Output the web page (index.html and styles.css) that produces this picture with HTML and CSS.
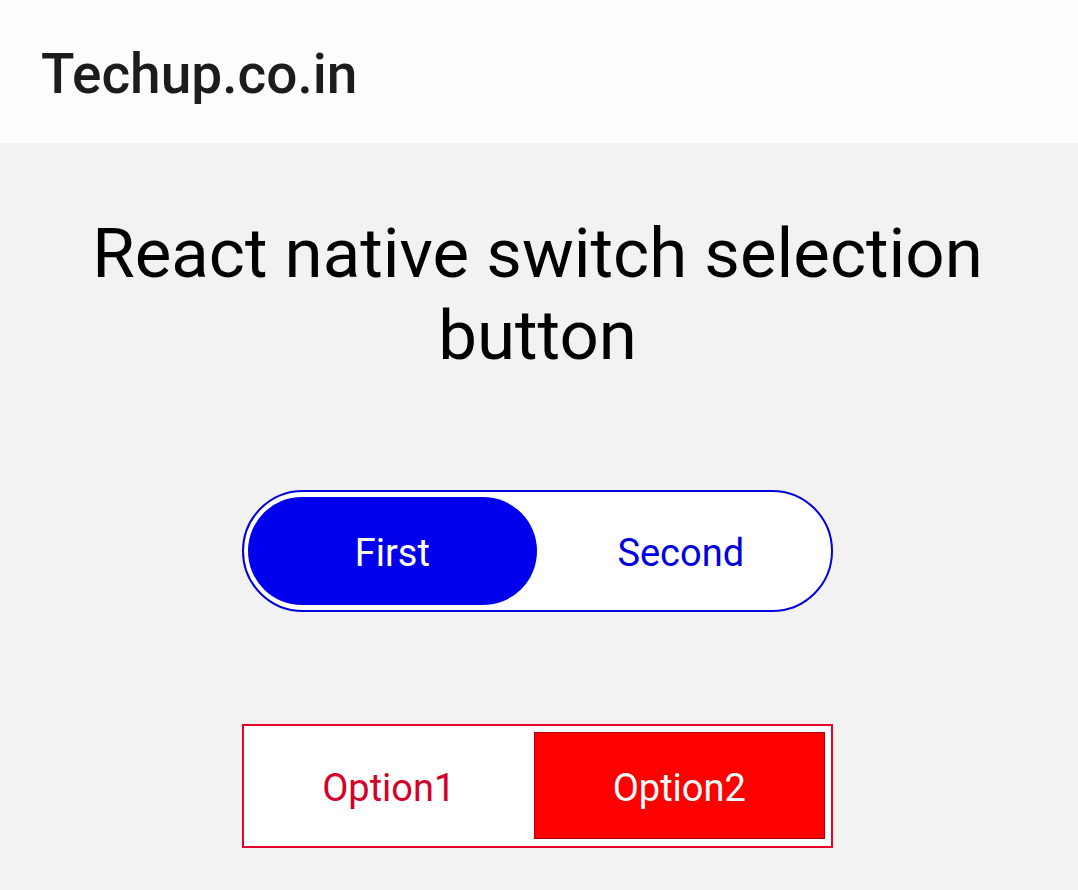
FILE: index.html
```html
<!DOCTYPE html>
<html lang="en">
<head>
    <meta charset="UTF-8">
    <title>Techup.co.in - Switch selector</title>
    <link rel="stylesheet" href="styles.css">
</head>
<body>
    <div class="app-bar">
        <div class="app-title">Techup.co.in</div>
    </div>

    <div class="screen">
        <h1 class="heading">React native switch selection button</h1>

        <div class="switch round">
            <div class="switch-item active">First</div>
            <div class="switch-item">Second</div>
        </div>

        <div class="switch square">
            <div class="switch-item">Option1</div>
            <div class="switch-item active">Option2</div>
        </div>
    </div>
</body>
</html>
```

FILE: styles.css
```css
body {
    margin: 0;
    font-family: Roboto, "Noto Sans", sans-serif;
    background: #f2f2f2;
    min-height: 100vh;
}

.app-bar {
    height: 143px;
    background: #fdfdfd;
    display: flex;
    align-items: center;
    padding-left: 41px;
}

.app-title {
    font-size: 55px;
    font-weight: 500;
    color: #1c1c1c;
    margin-top: 4px;
}

.screen {
    display: flex;
    flex-direction: column;
    align-items: center;
    padding-top: 70px;
    padding-right: 3px;
}

.heading {
    margin: 0 0 113px;
    width: 960px;
    text-align: center;
    font-size: 69px;
    line-height: 82px;
    font-weight: 400;
    color: #000;
}

.switch {
    width: 591px;
    height: 122px;
    box-sizing: border-box;
    background: #fff;
    display: flex;
    margin-bottom: 112px;
}

.switch-item {
    flex: 1;
    display: flex;
    align-items: center;
    justify-content: center;
    font-size: 38px;
    padding-top: 4px;
}

/* pill style, blue */
.switch.round {
    border: 2px solid #0000e0;
    border-radius: 61px;
    padding: 5px 6px 5px 4px;
}

.switch.round .switch-item {
    color: #0000e0;
    border-radius: 54px;
}

.switch.round .switch-item.active {
    background: #0000ec;
    color: #fff;
}

/* square style, red */
.switch.square {
    height: 124px;
    border: 2px solid #e8002a;
    padding: 6px 6px 7px 0;
}

.switch.square .switch-item {
    color: #d4002a;
}

.switch.square .switch-item.active {
    background: #ff0000;
    color: #fff;
    border: 1px solid #b00010;
}
```
